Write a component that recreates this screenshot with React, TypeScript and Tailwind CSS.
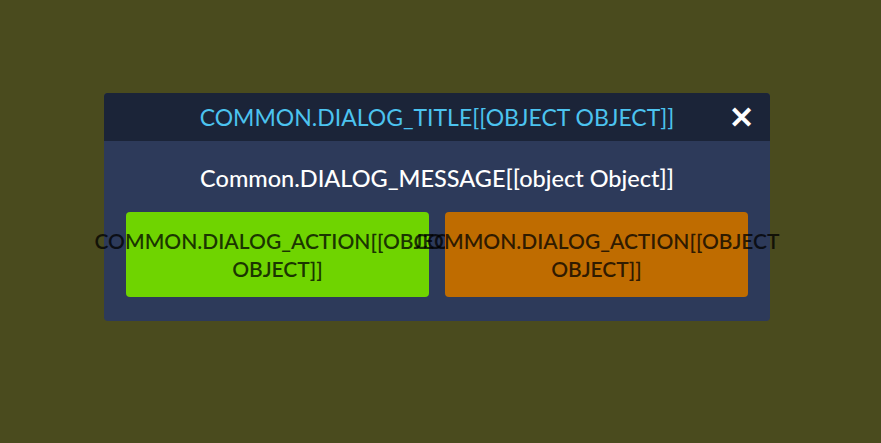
import React from "react";

export default function App() {
  return (
    <div
      className="w-[881px] h-[443px] bg-[#4a4b1e] flex justify-start pl-[104px] pt-[93px] overflow-hidden"
      style={{ fontFamily: 'Lato, "Noto Sans", sans-serif' }}
    >
      <div className="w-[666px] h-[228px] shrink-0 bg-[#2d3a5a] rounded-[4px] flex flex-col">
        <div className="relative h-[48px] bg-[#1b2438] rounded-t-[4px] flex items-center justify-center">
          <span className="text-[23px] text-[#4cc3ef] leading-none">COMMON.DIALOG_TITLE[[OBJECT OBJECT]]</span>
          <span className="absolute right-[16px] top-[8px] text-white text-[30px] font-bold leading-none">✕</span>
        </div>
        <div className="flex flex-col items-center pt-[21px] px-[22px]">
          <div className="text-white text-[23.5px] leading-[32px] font-medium">Common.DIALOG_MESSAGE[[object Object]]</div>
          <div className="flex gap-[16px] mt-[18px] w-full">
            <div className="flex-1 min-w-0 h-[85px] rounded-[4px] bg-[#6fd400] flex items-center justify-center">
              <div className="text-[rgba(0,0,0,0.75)] text-[21px] leading-[28px] font-semibold text-center whitespace-nowrap">
                COMMON.DIALOG_ACTION[[OBJECT<br />OBJECT]]
              </div>
            </div>
            <div className="flex-1 min-w-0 h-[85px] rounded-[4px] bg-[#bf6c00] flex items-center justify-center">
              <div className="text-[rgba(0,0,0,0.75)] text-[21px] leading-[28px] font-semibold text-center whitespace-nowrap">
                COMMON.DIALOG_ACTION[[OBJECT<br />OBJECT]]
              </div>
            </div>
          </div>
        </div>
      </div>
    </div>
  );
}
